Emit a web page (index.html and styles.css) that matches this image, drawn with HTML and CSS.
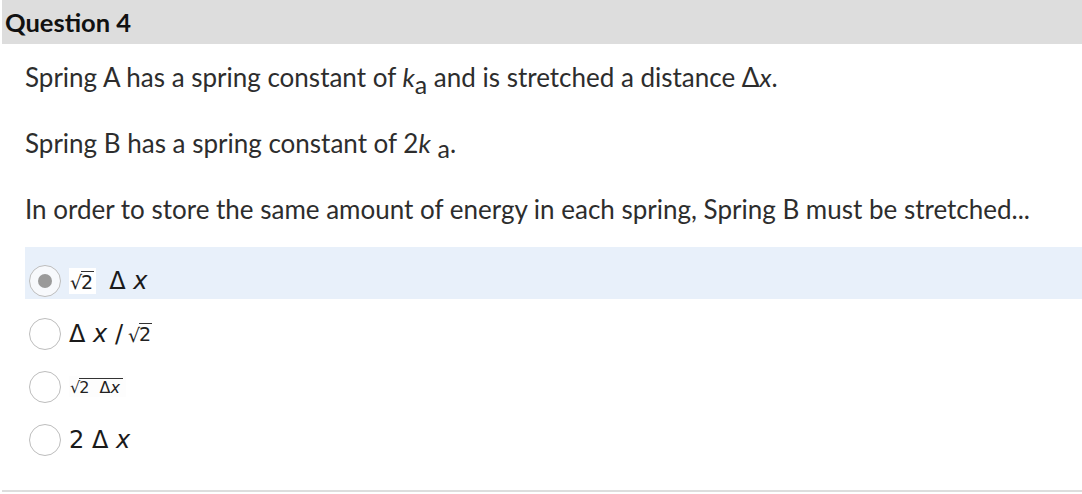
FILE: index.html
```html
<!DOCTYPE html>
<html>
<head>
<meta charset="utf-8">
<link rel="stylesheet" href="styles.css">
</head>
<body>
<div class="question">
  <div class="header"><span class="title">Question 4</span></div>
  <div class="text">
    <p>Spring A has a spring constant of <i>k</i><sub class="sub-a">a</sub> and is stretched a distance Δ<i>x</i>.</p>
    <p>Spring B has a spring constant of 2<i>k</i> <sub class="sub-b">a</sub>.</p>
    <p>In order to store the same amount of energy in each spring, Spring B must be stretched...</p>
  </div>
  <div class="answers">
    <label class="answer selected">
      <span class="radio checked"></span>
      <span class="eq big"><span class="rt">√</span><span class="ov">2</span></span>
      <span class="atext gap">Δ <i>x</i></span>
    </label>
    <label class="answer">
      <span class="radio"></span>
      <span class="atext">Δ <i>x</i> /</span>
      <span class="eq big after"><span class="rt">√</span><span class="ov">2</span></span>
    </label>
    <label class="answer">
      <span class="radio"></span>
      <span class="eq small"><span class="rt">√</span><span class="ov">2&nbsp;&nbsp;Δ<i>x</i></span></span>
    </label>
    <label class="answer">
      <span class="radio"></span>
      <span class="atext">2 Δ <i>x</i></span>
    </label>
  </div>
  <div class="footer"></div>
</div>
</body>
</html>
```
FILE: styles.css
```css
html, body { margin: 0; padding: 0; background: #fff; }
body { font-family: Lato, "Liberation Sans", sans-serif; color: #2d2d2d; }
.question { margin-left: 2px; }
.header {
  background: #dddddd;
  height: 44px;
  display: flex;
  align-items: center;
  padding-left: 3px;
}
.title { font-weight: 700; font-size: 25.5px; color: #111; }
.text { padding: 18px 0 0 23px; font-size: 26px; }
.text p { margin: 0 0 35px 0; line-height: 31px; white-space: nowrap; }
.text p:last-child { margin-bottom: 22px; }
.sub-a { font-size: 25px; vertical-align: -7px; line-height: 0; }
.sub-b { font-size: 25px; vertical-align: -5px; line-height: 0; }
.answers { margin-left: 23px; }
.answer {
  display: flex;
  align-items: center;
  height: 53px;
  padding: 16px 0 0 4px;
  box-sizing: border-box;
  font-size: 24px;
  font-family: "DejaVu Sans", "Liberation Sans", sans-serif;
  color: #1a1a1a;
}
.answer.selected { background: #e8f0fa; height: 52px; }
.radio {
  width: 32px; height: 32px;
  border: 1px solid #bdbdbd;
  border-radius: 50%;
  background: #fff;
  box-sizing: border-box;
  display: flex; align-items: center; justify-content: center;
  margin-right: 8px;
  flex: none;
}
.radio.checked { background: #f7f9fc; }
.radio.checked::after {
  content: "";
  width: 14px; height: 14px; border-radius: 50%;
  background: #9a9a9a;
}
.atext { white-space: pre; }
.atext.gap { margin-left: 13px; }
.eq {
  background: #fff;
  font-family: "DejaVu Sans", sans-serif;
  color: #222;
  display: inline-flex;
  align-items: flex-end;
}
.eq.big { font-size: 19px; padding: 3px 2px 2px 1px; }
.eq.after { margin-left: 4px; background: transparent; }
.eq.small { font-size: 16px; padding: 2px 3px 1px 1px; background: #fdfdfd; }
.rt { line-height: 1; }
.ov { line-height: 1.05; padding: 1px 1px 0 0; border-top: 1px solid #333; margin-left: -1px; white-space: pre; }
.eq.small .ov { padding-right: 3px; }
.footer { margin-top: 32px; height: 2px; background: #dddddd; }
```
